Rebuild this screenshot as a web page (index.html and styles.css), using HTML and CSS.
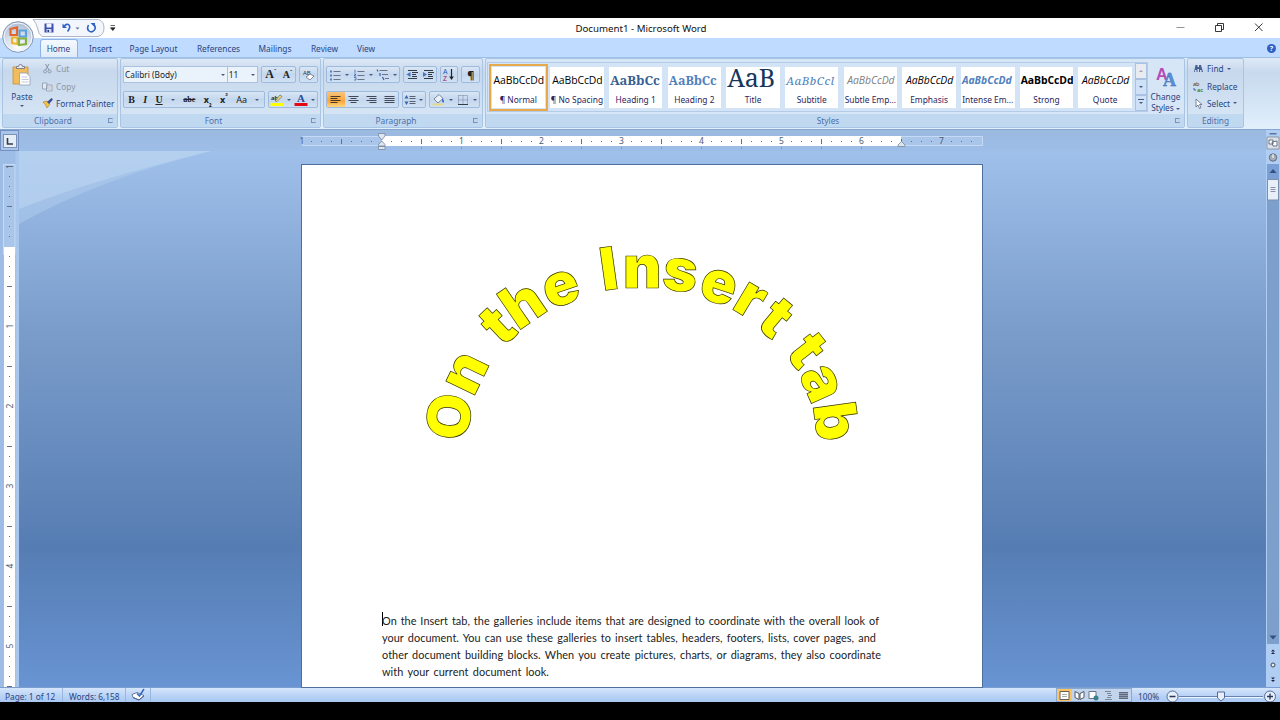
FILE: index.html
```html
<!DOCTYPE html>
<html lang="en">
<head>
  <meta charset="UTF-8" />
  <title>Document1 - Microsoft Word</title>
  <link rel="stylesheet" href="styles.css">
</head>
<body>
  <div class="window">
    <header class="titlebar">
      <svg class="quick" width="120" height="20" viewBox="0 0 120 20">
        <path d="M33 1.5H98.500Q104 3 104 10Q104 17 98 18.500H42Q38 16 37.500 10Q36 4 33 1.500Z" fill="#f3f7fd" stroke="#9aa6b8" stroke-width=".8"/>
        <path d="M44.500 5.500h9v9h-9z" fill="#3d4fae"/><path d="M46.500 5.500h5v4h-5z" fill="#eef3ff"/><path d="M46.500 11h5v3.500h-5z" fill="#cdd6ee"/><path d="M47.500 12h1.500v2h-1.500z" fill="#27357c"/>
        <path d="M62.500 5.500v4.500h4.500z" fill="#2f62c4"/><path d="M64 8.500q3-3.500 5-1.500t-1.500 6.500" fill="none" stroke="#2f62c4" stroke-width="1.600"/>
        <path d="M75.500 9.500h4l-2 2z" fill="#5b6f92"/>
        <path d="M88.500 7q-2 4 .5 6t5-.5t0-6" fill="none" stroke="#2f62c4" stroke-width="1.600"/><path d="M90.500 5h4.500v4.500z" fill="#2f62c4"/>
        <path d="M110.500 7.500h4.500M110.500 9.800h4.500l-2.200 2.800z" fill="#222" stroke="#222" stroke-width=".7"/>
      </svg>
      <h1>Document1 - Microsoft Word</h1>
      <svg class="controls" width="110" height="20" viewBox="0 0 110 20">
        <g fill="none" stroke="#222" stroke-width=".9">
          <path d="M6.500 9.500h8" stroke="#888"/>
          <path d="M45.500 7.500h6v6h-6zM47.500 7.500v-2h6v6h-2"/>
          <path d="M85 5.500l7.500 7.500M92.500 5.500l-7.500 7.500"/>
        </g>
      </svg>
    </header>

    <svg class="office" width="34" height="34" viewBox="0 0 34 34">
      <defs>
        <radialGradient id="orb" cx=".5" cy=".8" r=".8"><stop offset="0" stop-color="#fff"/><stop offset=".5" stop-color="#d7e0ed"/><stop offset="1" stop-color="#aab9d0"/></radialGradient>
      </defs>
      <circle cx="17" cy="17" r="15.300" fill="url(#orb)" stroke="#8799b5"/>
      <circle cx="17" cy="17" r="14" fill="none" stroke="#f6f9ff" stroke-width="1"/>
      <g fill="none" stroke-width="2.200">
        <path d="M18.500 10.500h6.500v6h-6.500z" stroke="#5ba3dc"/>
        <path d="M9.500 9l6.500-1.500v7.500h-6.500z" stroke="#e2662f"/>
        <path d="M11 17.500h5.500v6.500l-5.500-1z" stroke="#f0b32e"/>
        <path d="M18 18.500h7v5.500l-7 1z" stroke="#84b044"/>
      </g>
    </svg>

    <nav class="tabs">
      <a class="home active">Home</a>
      <a class="insert">Insert</a>
      <a class="layout">Page Layout</a>
      <a class="references">References</a>
      <a class="mailings">Mailings</a>
      <a class="review">Review</a>
      <a class="view">View</a>
      <span class="help">?</span>
    </nav>

    <section class="ribbon">
      <div class="group clipboard">
        <div class="group-body">
          <div class="paste">
            <svg width="20" height="23" viewBox="0 0 20 23">
              <path d="M1 3h15v17h-15z" fill="#f0bc5c" stroke="#c98f35" stroke-width=".8"/>
              <path d="M4.500 4.500v-2h2q0-2 2-2t2 2h2v2z" fill="#e7e9ee" stroke="#686d78" stroke-width=".8"/>
              <path d="M7.500 9h7l3.500 3.500v8.500h-10.500z" fill="#fff" stroke="#8f9db5" stroke-width=".8"/>
              <path d="M9.500 13h6M9.500 15.500h7M9.500 18h7" stroke="#b4bfd2" stroke-width=".8"/>
            </svg>
            <span>Paste</span>
            <i class="caret"></i>
          </div>
          <ul class="commands">
            <li class="off"><svg width="11" height="11" viewBox="0 0 11 11"><path d="M3.500 1l3.500 6M7 1l-3.500 6" stroke="#8c96a5"/><path d="M3 7a1.500 1.500 0 1 0 .1 0M7.500 7a1.500 1.500 0 1 0 .1 0" fill="none" stroke="#8c96a5"/></svg>Cut</li>
            <li class="off"><svg width="11" height="11" viewBox="0 0 11 11"><path d="M.5 2h4.500v6h-4.500zM4.500 4h5.500v6h-5.500z" fill="#e3e9f1" stroke="#99a5b6"/><path d="M6 6h3M6 8h3" stroke="#a9b4c3" stroke-width=".7"/></svg>Copy</li>
            <li><svg width="11" height="11" viewBox="0 0 11 11"><path d="M1 4l4-1 3 3-3 4q-1-3-4-6z" fill="#f5c04c" stroke="#a97c26" stroke-width=".6"/><path d="M5 4l4.500-4 1.500 1.500-4 4.500z" fill="#3a4f8c"/></svg>Format Painter</li>
          </ul>
        </div>
        <footer>Clipboard<b class="launch"></b></footer>
      </div>

      <div class="group font">
        <div class="group-body rows">
          <div class="row">
            <div class="combo face">Calibri (Body)<i class="caret"></i></div>
            <div class="combo size">11<i class="caret"></i></div>
            <div class="tools grow"><span class="serif big">A<sup>ˆ</sup></span><span class="serif">A<sup>ˇ</sup></span></div>
            <div class="tools clear"><svg width="13" height="12" viewBox="0 0 13 12"><text x="1" y="6" font-family="Noto Sans" font-size="6" fill="#333">AB</text><path d="M4 8l4-3 4 2-4 4z" fill="#fff" stroke="#6a6f7c" stroke-width=".8"/></svg></div>
          </div>
          <div class="row">
            <div class="tools format"><span class="serif">B</span><span class="serif"><em>I</em></span><span class="serif"><u>U</u></span><i class="caret"></i><span class="serif small"><s>abc</s></span><span class="sans">x<sub>₂</sub></span><span class="sans">x<sup>²</sup></span><span class="case">Aa</span><i class="caret"></i></div>
            <div class="tools colors">
              <svg width="14" height="14" viewBox="0 0 14 14"><text x="1" y="6.500" font-family="Noto Sans" font-size="6" font-weight="bold" fill="#333">ab</text><path d="M5 8l5-6 2 1.500-5 5z" fill="#f2d878" stroke="#646b50" stroke-width=".7"/><path d="M.5 10h13v3h-13z" fill="#ff0"/></svg>
              <i class="caret"></i>
              <svg width="14" height="14" viewBox="0 0 14 14"><text x="3" y="8.800" font-family="Liberation Serif" font-size="11" font-weight="bold" fill="#2b4a9b">A</text><path d="M.5 10h13v3h-13z" fill="#e30b13"/></svg>
              <i class="caret"></i>
            </div>
          </div>
        </div>
        <footer>Font<b class="launch"></b></footer>
      </div>

      <div class="group paragraph">
        <div class="group-body rows">
          <div class="row">
            <div class="tools lists">
              <svg width="12" height="12" viewBox="0 0 12 12"><path d="M4.500 2.500h7M4.500 6.500h7M4.500 10.500h7" stroke="#6b7384"/><path d="M1 1.500h2v2h-2zM1 5.500h2v2h-2zM1 9.500h2v2h-2z" fill="#5c7db8"/></svg><i class="caret"></i>
              <svg width="12" height="12" viewBox="0 0 12 12"><path d="M4.500 2.500h7M4.500 6.500h7M4.500 10.500h7" stroke="#6b7384"/><path d="M2 .8v3M1 5h1.500v1l-1.500 1h2M1 8.500h2v2.500h-2" fill="none" stroke="#3d62a8" stroke-width=".8"/></svg><i class="caret"></i>
              <svg width="12" height="12" viewBox="0 0 12 12"><path d="M2.500 1.500h8M5 5.500h6M8 9.500h4" stroke="#6b7384"/><path d="M0 .5l1 2M3 4v3M5.500 8l1.500 3" stroke="#3d62a8" stroke-width="1.200"/></svg><i class="caret"></i>
            </div>
            <div class="tools indents">
              <svg width="12" height="12" viewBox="0 0 12 12"><path d="M2 1.500h9M6 3.500h6M6 5.500h4M6 7.500h5M2 9.500h9" stroke="#333b4a"/><path d="M4.500 3v5l-4-2.500z" fill="#4b74bd"/></svg>
              <svg width="12" height="12" viewBox="0 0 12 12"><path d="M2 1.500h9M6 3.500h6M6 5.500h4M6 7.500h5M2 9.500h9" stroke="#333b4a"/><path d="M1 3v5l4-2.500z" fill="#4b74bd"/></svg>
            </div>
            <div class="tools single"><svg width="12" height="13" viewBox="0 0 12 13"><text x="0" y="6" font-family="Noto Sans" font-size="7" fill="#2b55b0">A</text><text x="0" y="12.500" font-family="Noto Sans" font-size="7" fill="#a02340">Z</text><path d="M8.500 1v9" stroke="#222" stroke-width="1.200"/><path d="M6.200 8.500h4.600l-2.300 3.500z" fill="#222"/></svg></div>
            <div class="tools single"><span class="pilcrow">¶</span></div>
          </div>
          <div class="row">
            <div class="tools align">
              <span class="on"><svg width="11" height="10" viewBox="0 0 11 10"><path d="M.5 1.500h10M.5 3.500h7M.5 5.500h10M.5 7.500h7" stroke="#4a3a25"/></svg></span>
              <span><svg width="11" height="10" viewBox="0 0 11 10"><path d="M.5 1.500h10M2.500 3.500h6M.5 5.500h10M2.500 7.500h6" stroke="#40485a"/></svg></span>
              <span><svg width="11" height="10" viewBox="0 0 11 10"><path d="M.5 1.500h10M3.500 3.500h7M.5 5.500h10M3.500 7.500h7" stroke="#40485a"/></svg></span>
              <span><svg width="11" height="10" viewBox="0 0 11 10"><path d="M.5 1.500h10M.5 3.500h10M.5 5.500h10M.5 7.500h10" stroke="#40485a"/></svg></span>
            </div>
            <div class="tools spacing"><svg width="12" height="12" viewBox="0 0 12 12"><path d="M5.500 2.500h6M5.500 4.500h6M5.500 7.500h6M5.500 9.500h6" stroke="#596174"/><path d="M.5 4.500l2-3.500 2 3.500zM.5 7.500l2 3.500 2-3.500z" fill="#3d62a8"/></svg><i class="caret"></i></div>
            <div class="tools fills">
              <svg width="13" height="13" viewBox="0 0 13 13"><path d="M2 6l5-4.500 4 4-5 4.500z" fill="#eef2f8" stroke="#5d6b88" stroke-width=".8"/><path d="M10 5q3 3 1.500 4.500t-1.500-4.500" fill="#3163bd"/><path d="M.5 10.500h11v2h-11z" fill="#e4d88a"/></svg><i class="caret"></i>
              <svg width="12" height="12" viewBox="0 0 12 12"><path d="M1.500 1.500h9v9M1.500 1.500v9M6 1.500v9M1.500 6h9" fill="none" stroke="#77829a" stroke-dasharray="1 1"/><path d="M1 10.500h10" stroke="#333b4a"/></svg><i class="caret"></i>
            </div>
          </div>
        </div>
        <footer>Paragraph<b class="launch"></b></footer>
      </div>

      <div class="group styles">
        <div class="group-body">
          <div class="gallery">
            <div class="style selected"><span class="sample">AaBbCcDd</span><small>¶ Normal</small></div>
            <div class="style"><span class="sample">AaBbCcDd</span><small>¶ No Spacing</small></div>
            <div class="style"><span class="sample h1">AaBbCc</span><small>Heading 1</small></div>
            <div class="style"><span class="sample h2">AaBbCc</span><small>Heading 2</small></div>
            <div class="style"><span class="sample title">AaB</span><small>Title</small></div>
            <div class="style"><span class="sample subtitle">AaBbCcl</span><small>Subtitle</small></div>
            <div class="style"><span class="sample subtle">AaBbCcDd</span><small>Subtle Emp...</small></div>
            <div class="style"><span class="sample emphasis">AaBbCcDd</span><small>Emphasis</small></div>
            <div class="style"><span class="sample intense">AaBbCcDd</span><small>Intense Em...</small></div>
            <div class="style"><span class="sample strong">AaBbCcDd</span><small>Strong</small></div>
            <div class="style"><span class="sample emphasis">AaBbCcDd</span><small>Quote</small></div>
            <div class="pager"><span class="dim"><i class="caret up"></i></span><span><i class="caret"></i></span><span><i class="caret more"></i></span></div>
          </div>
          <div class="change">
            <svg width="22" height="21" viewBox="0 0 22 21"><text x="1" y="14" font-family="Liberation Sans" font-size="16" font-weight="bold" fill="#b44bb8">A</text><text x="8" y="19.500" font-family="Liberation Serif" font-size="18" font-weight="bold" fill="#5b8fdb" stroke="#3768b4" stroke-width=".4">A</text></svg>
            <span>Change</span>
            <span>Styles <i class="caret"></i></span>
          </div>
        </div>
        <footer>Styles<b class="launch"></b></footer>
      </div>

      <div class="group editing">
        <div class="group-body">
          <ul class="commands">
            <li><svg width="11" height="11" viewBox="0 0 11 11"><path d="M1 9l1.500-7h2v7zM6 9v-7h2l2 7zM4 4h3v2h-3z" fill="#4a5f92"/><path d="M2 7h1.500v2h-1.500zM7 7h1.500v2h-1.500z" fill="#cbd8f0"/></svg>Find <i class="caret"></i></li>
            <li><svg width="11" height="11" viewBox="0 0 11 11"><text x="0" y="5" font-family="Noto Sans" font-size="5.500" fill="#333">ab</text><text x="4" y="10.500" font-family="Noto Sans" font-size="5.500" font-weight="bold" fill="#2f8a46">ac</text><path d="M1 7v2h2" fill="none" stroke="#3a62b5"/></svg>Replace</li>
            <li><svg width="11" height="11" viewBox="0 0 11 11"><path d="M3 1v8l2-2 1.500 3.500 1.500-.8-1.500-3.200h2.500z" fill="#fff" stroke="#5c6a85" stroke-width=".8"/></svg>Select <i class="caret"></i></li>
          </ul>
        </div>
        <footer>Editing</footer>
      </div>
    </section>

    <div class="ruler-row">
      <div class="tabstop"><svg width="12" height="12" viewBox="0 0 12 12"><path d="M3.500 3v6h5.500" fill="none" stroke="#333b52" stroke-width="1.600"/></svg></div>
      <svg class="ruler" width="700" height="21" viewBox="300 130 700 21">
        <defs>
          <pattern id="inch" x="382" y="137" width="80" height="9" patternUnits="userSpaceOnUse">
            <path d="M9 4h1v1h-1zM19 4h1v1h-1zM29 4h1v1h-1zM49 4h1v1h-1zM59 4h1v1h-1zM69 4h1v1h-1zM39 2h1v5h-1z" fill="#63708a"/>
          </pattern>
        </defs>
        <path d="M302.500 136.500h680v9h-680z" fill="#a9c5e9" stroke="#c5daf4"/>
        <path d="M382 136h519v10h-519z" fill="#fff"/>
        <path d="M303 137h678v9h-678z" fill="url(#inch)"/>
        <path d="M421.500 147v2M461.500 147v2M501.500 147v2M541.500 147v2M581.500 147v2M621.500 147v2M661.500 147v2M701.500 147v2M741.500 147v2M781.500 147v2M821.500 147v2M861.500 147v2" stroke="#7d99c2"/>
        <g class="numbers"><text x="302" y="144">1</text><text x="461.500" y="144">1</text><text x="541.500" y="144">2</text><text x="621.500" y="144">3</text><text x="701.500" y="144">4</text><text x="781.500" y="144">5</text><text x="861.500" y="144">6</text><text x="941.500" y="144">7</text></g>
        <g fill="#dfe6ef" stroke="#76879f" stroke-width=".8">
          <path d="M378.500 133.500h6.500v2.500l-3.200 4-3.300-4z"/><path d="M381.800 141l3.200 3.500v1.500h-6.500v-1.500zM378.500 146.500h6.500v3h-6.500z"/><path d="M901.500 141.500l3.500 3.500v1.500h-7v-1.500z"/>
        </g>
      </svg>
    </div>

    <main class="workspace">
      <svg class="vruler" width="19" height="536" viewBox="0 151 19 536">
        <defs>
          <pattern id="vinch" x="4" y="247" width="11" height="80" patternUnits="userSpaceOnUse">
            <path d="M5 9h1v1h-1zM5 19h1v1h-1zM5 29h1v1h-1zM5 49h1v1h-1zM5 59h1v1h-1zM5 69h1v1h-1zM3 39h5v1h-5z" fill="#63708a"/>
          </pattern>
        </defs>
        <path d="M0 151h19v536h-19z" fill="#9dbde6"/><path d="M15.500 151h3.500v536h-3.500z" fill="#a9c7ec"/>
        <path d="M3.500 164.500h11.500v90h-11.500z" fill="#a9c5e9" stroke="#c5daf4"/>
        <path d="M4 247h11v440h-11z" fill="#fff"/>
        <path d="M4 168h11v519h-11z" fill="url(#vinch)"/>
        <g class="numbers"><text transform="translate(12.500 166.500) rotate(-90)">1</text><text transform="translate(12.500 326) rotate(-90)">1</text><text transform="translate(12.500 406) rotate(-90)">2</text><text transform="translate(12.500 486) rotate(-90)">3</text><text transform="translate(12.500 566) rotate(-90)">4</text><text transform="translate(12.500 646) rotate(-90)">5</text></g>
      </svg>

      <div class="canvas">
        <svg class="swoosh" width="200" height="75" viewBox="0 0 200 75">
          <path d="M0 0H192Q80 28 0 73Z" fill="#b5d0ef" opacity=".45"/>
          <path d="M0 0H192Q70 30 0 58Z" fill="#bed7f3" opacity=".55"/>
        </svg>
        <article class="page">
          <svg class="wordart" width="460" height="220" viewBox="410 235 460 220">
            <text transform="translate(470 419) rotate(-83)">O</text>
            <text transform="translate(482 380.500) rotate(-64)">n</text>
            <text transform="translate(511 340) rotate(-43)">t</text>
            <text transform="translate(534 320.500) rotate(-34.500)">h</text>
            <text transform="translate(566.500 304) rotate(-19)">e</text>
            <text transform="translate(611.500 289.500) rotate(-8)">I</text>
            <text transform="translate(642.200 287.700)">n</text>
            <text transform="translate(678 291) rotate(8)">s</text>
            <text transform="translate(713.500 302) rotate(18)">e</text>
            <text transform="translate(741.200 314.500) rotate(31)">r</text>
            <text transform="translate(763.500 333) rotate(40)">t</text>
            <text transform="translate(791.500 362.500) rotate(52)">t</text>
            <text transform="translate(805.500 390) rotate(66)">a</text>
            <text transform="translate(815.500 424) rotate(82)">b</text>
          </svg>
          <div class="body-text">
            <p class="l1">On the Insert tab, the galleries include items that are designed to coordinate with the overall look of</p>
            <p class="l2">your document. You can use these galleries to insert tables, headers, footers, lists, cover pages, and</p>
            <p class="l3">other document building blocks. When you create pictures, charts, or diagrams, they also coordinate</p>
            <p class="l4">with your current document look.</p>
          </div>
        </article>
      </div>

      <svg class="scroll" width="14" height="557" viewBox="0 130 14 557">
        <path d="M0 130h14v557h-14z" fill="#b0cdf3"/>
        <path d="M3.500 133h7v1.500h-7z" fill="#5d7699"/>
        <path d="M1 137h12v12h-12z" fill="#dce1e8" stroke="#8b97a9"/><path d="M3 140h4v4h-4zM6 142l5-1v5h-4z" fill="#fff" stroke="#5a6579" stroke-width=".9"/>
        <circle cx="7" cy="157.500" r="3.700" fill="#a7adb7" stroke="#626b7b"/><path d="M7 154v4" stroke="#fff"/>
        <path d="M1 164h12v480h-12z" fill="#7d9fcc"/><path d="M1 164h12v14.500h-12z" fill="#799fd5"/>
        <path d="M3.500 173l3.500-4 3.500 4zM3.500 635.500h7l-3.500 4z" fill="#35507f"/>
        <path d="M1.500 179.500h11v20.500h-11z" fill="#e8eff8" stroke="#798fae"/><path d="M4.500 187.500h5M4.500 189.500h5M4.500 191.500h5" stroke="#8793a7"/>
        <path d="M5 651.500l2-2 2 2zM5 654l2-2 2 2zM5 677.500l2 2 2-2zM5 680l2 2 2-2z" fill="#1c2740"/><circle cx="7" cy="665" r="2" fill="#e8edf4" stroke="#3b4558"/>
      </svg>
    </main>

    <footer class="status">
      <span class="pages">Page: 1 of 12</span>
      <span class="words">Words: 6,158</span>
      <span class="proof"><svg width="15" height="13" viewBox="0 0 15 13"><path d="M1 6.500l5-2 7 3-5 4.500-6-2.500z" fill="#fff" stroke="#596c93" stroke-width=".9"/><path d="M2 9.500l6 2.500 5-4" fill="none" stroke="#4d6296"/><path d="M6 5.500l2.500 2.500 4.500-7" fill="none" stroke="#3869c4" stroke-width="1.500"/></svg></span>
      <div class="views">
        <span class="on"><svg width="11" height="11" viewBox="0 0 11 11"><path d="M1 1.500h9v8h-9z" fill="#fff" stroke="#66604f"/><path d="M3 4.500h5M3 6.500h5" stroke="#aaa"/></svg></span>
        <span><svg width="11" height="11" viewBox="0 0 11 11"><path d="M1 1.500l4 2v6l-4-2zM10 1.500l-4 2v6l4-2z" fill="#fff" stroke="#4d5666"/></svg></span>
        <span><svg width="11" height="11" viewBox="0 0 11 11"><path d="M1 1.500h7v7h-7z" fill="#fff" stroke="#687387"/><circle cx="8" cy="8" r="2.500" fill="#397f8c"/></svg></span>
        <span><svg width="11" height="11" viewBox="0 0 11 11"><path d="M2 1.500h6M4 3.500h4M5 5.500h4M4 7.500h4M2 9.500h7" stroke="#7d879a"/></svg></span>
        <span><svg width="11" height="11" viewBox="0 0 11 11"><path d="M1 2h9v7h-9z" fill="#8f9bb0"/><path d="M1 2.500h9M1 4.500h9M1 6.500h9M1 8.500h9" stroke="#5f6b80"/></svg></span>
      </div>
      <span class="percent">100%</span>
      <svg class="zoom" width="116" height="15" viewBox="1164 687 116 15">
        <path d="M1179 695.500h84" stroke="#6582b0"/><path d="M1179 696.500h84" stroke="#eff5ff"/>
        <g fill="#e8effa" stroke="#526c9b"><circle cx="1172.500" cy="695.500" r="5.500"/><circle cx="1270" cy="695.500" r="5.500"/><path d="M1217.500 691h7v6l-3.500 3-3.500-3z"/></g>
        <path d="M1169.500 695.500h6M1267 695.500h6M1270 692.500v6" stroke="#27365c" stroke-width="1.300"/>
      </svg>
    </footer>
  </div>
</body>
</html>
```
FILE: styles.css
```css
* {
  box-sizing: border-box;
}
body {
  margin: 0;
  padding: 18px 0;
  height: 720px;
  overflow: hidden;
  background: #000;
  font-family: "Noto Sans", sans-serif;
  font-size: 8.3px;
  color: #2c4480;
}
svg {
  display: block;
  flex: none;
  overflow: visible;
}
.window {
  position: relative;
  display: flex;
  flex-direction: column;
  width: 1280px;
  height: 684px;
  overflow: hidden;
}
.titlebar {
  display: flex;
  height: 20px;
  background: #fff;
}
.titlebar h1 {
  margin: 0;
  width: 160px;
  text-align: center;
  font-size: 9.7px;
  font-weight: 400;
  line-height: 21px;
  white-space: nowrap;
  color: #111;
}
.titlebar .quick {
  margin-right: 441px;
}
.titlebar .controls {
  margin-left: auto;
}
/* the orb hangs over both the title bar and the tab strip */
.office {
  position: absolute;
  left: 1px;
  top: 2px;
}
.tabs {
  display: flex;
  height: 19px;
  padding-left: 40px;
  padding-right: 4px;
  background: #bfdbff;
}
.tabs a {
  line-height: 21px;
  text-align: center;
}
.tabs .home { width: 38px; margin-right: 1px; }
.tabs .insert { width: 43px; }
.tabs .layout { width: 63px; }
.tabs .references { width: 67px; }
.tabs .mailings { width: 46px; }
.tabs .review { width: 53px; }
.tabs .view { width: 30px; }
.tabs .active {
  margin-top: 1px;
  line-height: 17px;
  border: 1px solid #8db2e3;
  border-bottom: 0;
  border-radius: 3px 3px 0 0;
  background: linear-gradient(#f4f9ff, #e0ebf8);
  text-indent: -1px;
}
.help {
  margin: 6px 0 0 auto;
  width: 9px;
  height: 9px;
  border-radius: 50%;
  background: #3160c4;
  color: #fff;
  font-size: 7px;
  font-weight: bold;
  line-height: 9px;
  text-align: center;
}
.ribbon {
  display: flex;
  gap: 3px;
  height: 73px;
  padding: 0 2px 1px;
  border-top: 1px solid #9dbfe8;
  border-bottom: 1px solid #86a6d2;
  background: linear-gradient(#dfeaf7, #c8d9ee 20%, #d8e8f7 75%, #e2f0fb);
}
.group {
  display: flex;
  flex-direction: column;
  flex: none;
  border: 1px solid #a9c5e5;
  border-radius: 2px;
  background: linear-gradient(#dde8f5, #c7d8ed 18%, #d9e8f6);
}
.clipboard { width: 116px; }
.font { width: 200px; }
.paragraph { width: 160px; }
.styles { width: 700px; background: #d6e6f7; }
.editing { width: 57px; }
.font, .paragraph, .styles, .editing { margin-left: -1px; }
.font { width: 201px; }
.group-body {
  display: flex;
  flex: 1;
  min-height: 0;
}
.group > footer {
  display: flex;
  align-items: center;
  justify-content: center;
  height: 13px;
  padding-bottom: 1px;
  background: #c1d8f1;
  color: #4b71a9;
}
.launch {
  margin-left: auto;
  margin-right: 4px;
  width: 5px;
  height: 5px;
  border: 1px solid #7592bb;
  border-right-color: #b8cce8;
}
.group > footer::before {
  content: "";
  margin-left: -5px;
  margin-right: auto;
}
.editing > footer::before {
  display: none;
}
.caret {
  display: inline-block;
  flex: none;
  width: 0;
  height: 0;
  border: 2px solid transparent;
  border-top-color: #465b84;
  border-bottom: 0;
}
.paste {
  display: flex;
  flex-direction: column;
  align-items: center;
  width: 38px;
  padding-top: 5px;
}
.paste span {
  margin: 4px 0 3px;
  line-height: 11px;
}
.commands {
  margin: 1px 0 0;
  padding: 0;
  list-style: none;
  white-space: nowrap;
}
.clipboard .commands {
  margin-left: 1px;
}
.commands li {
  display: flex;
  align-items: center;
  gap: 3px;
  height: 17.400px;
}
.editing .commands {
  padding-left: 5px;
}
.off {
  color: #8e97a6;
}
.rows {
  flex-direction: column;
  gap: 8px;
  padding: 7px 2px 0;
}
.row {
  display: flex;
  gap: 3px;
  height: 17px;
}
.combo {
  display: flex;
  align-items: center;
  justify-content: space-between;
  padding: 0 2px 0 1px;
  border: 1px solid #abc1de;
  background: #eaf2fb;
  color: #222;
  font-size: 8.3px;
}
.face { width: 107px; }
.size { width: 32px; margin-left: -4px; }
.tools {
  display: flex;
  align-items: center;
  justify-content: space-around;
  border: 1px solid #9ebadd;
  border-radius: 2px;
  background: linear-gradient(#d9e6f5, #c4d7ee 50%, #d0e1f4);
  color: #222;
}
.grow { width: 36px; }
.clear { width: 19px; }
.format { width: 143px; }
.colors { width: 51px; }
.lists { width: 76px; }
.indents { width: 35px; }
.single { width: 19px; }
.align { width: 73px; }
.spacing { width: 24px; }
.fills { width: 52px; }
.serif {
  font-family: "Liberation Serif", serif;
  font-weight: bold;
  font-size: 10px;
}
.big { font-size: 12px; }
.small { font-size: 8px; }
.tools sup, .tools sub {
  font-size: 7px;
  line-height: 0;
}
.sans {
  font-weight: bold;
  font-size: 9px;
}
.case { font-size: 9px; }
.pilcrow { font-size: 11px; font-weight: bold; }
.align span {
  display: flex;
  align-items: center;
  justify-content: center;
  width: 18px;
  height: 100%;
}
.align .on {
  background: linear-gradient(#f6c57c, #fba63c 60%, #fdd77f);
}
.gallery {
  display: flex;
  gap: 5.200px;
  width: 661px;
  height: 50px;
  margin: 3px 0 0 1px;
  padding: 4px 0 3px 3.500px;
  border: 1px solid #b4cbe8;
  background: #d3e4f6;
}
.style {
  flex: none;
  width: 53.500px;
  height: 41px;
  overflow: hidden;
  background: #fff;
  text-align: center;
  white-space: nowrap;
  color: #000;
}
.selected {
  outline: 2px solid #e8a94a;
  outline-offset: 1px;
}
.sample {
  display: flex;
  align-items: center;
  justify-content: center;
  height: 27px;
  padding: 0 0 1px 1px;
  font-family: "Open Sans", sans-serif;
  font-size: 10.4px;
  letter-spacing: -.05px;
}
.style small {
  display: block;
  font-size: 8.4px;
  line-height: 12px;
  color: #2b2560;
}
.h1, .h2, .title, .subtitle {
  font-family: "Noto Serif", "Liberation Serif", serif;
  justify-content: flex-start;
}
.h1 { color: #365f91; font-weight: bold; font-size: 13px; }
.h2 { color: #4f81bd; font-weight: bold; font-size: 12.500px; }
.title { color: #17365d; font-size: 25px; line-height: 20px; padding-bottom: 8px; }
.subtitle { color: #4f81bd; font-style: italic; font-size: 11.500px; letter-spacing: .5px; }
.subtle { color: #808080; font-style: italic; }
.emphasis { font-style: italic; }
.intense { color: #4f81bd; font-style: italic; font-weight: bold; justify-content: flex-start; }
.strong { font-weight: bold; justify-content: flex-start; }
.pager {
  display: flex;
  flex-direction: column;
  width: 12px;
  margin: -4px 0 -3px -2px;
}
.pager span {
  display: flex;
  align-items: center;
  justify-content: center;
  flex: 1;
  border: 1px solid #a9c2e2;
  background: #cfe1f6;
}
.pager .dim {
  background: #e8ecf1;
}
.up {
  transform: scaleY(-1);
  opacity: .5;
}
.more {
  position: relative;
}
.more::before {
  content: "";
  position: absolute;
  left: -3px;
  top: -5px;
  width: 6px;
  height: 1px;
  background: #465b84;
}
.change {
  display: flex;
  flex-direction: column;
  align-items: center;
  width: 35px;
  padding-top: 7px;
  line-height: 11px;
  white-space: nowrap;
}
.change svg {
  margin-bottom: 4px;
}
.change .caret {
  vertical-align: middle;
}
.ruler-row {
  display: flex;
  height: 21px;
  background: linear-gradient(#9cb9df, #9dbee8);
}
.tabstop {
  display: flex;
  align-items: center;
  justify-content: center;
  width: 19px;
  margin-right: 281px;
  border: 1px solid #7590c0;
  background: #aac5ea;
}
.tabstop svg {
  background: #e5edf7;
  outline: 1px solid #7b91b8;
}
.numbers {
  font-size: 8.500px;
  fill: #4c5b75;
  text-anchor: middle;
}
.workspace {
  display: flex;
  height: 536px;
}
.vruler {
  overflow: hidden;
}
.canvas {
  position: relative;
  flex: 1;
  padding: 14px 0 0 283px;
  background: linear-gradient(#9fc0ea, #7b9dcb 33%, #567db3 74%, #6894d3);
}
.swoosh {
  position: absolute;
  left: 0;
  top: 0;
}
.page {
  width: 680px;
  height: 522px;
  padding: 70px 0 0 79.500px;
  outline: 1px solid #4f6f9d;
  background: #fff;
}
.wordart {
  margin-left: 28px;
}
.wordart text {
  font-family: "Inter", sans-serif;
  font-size: 59px;
  font-weight: 900;
  text-anchor: middle;
  fill: #ff0;
  stroke: #333300;
  stroke-width: .7;
}
.body-text {
  margin-top: 157px;
  border-left: 1px solid #000;
  border-image: linear-gradient(#000 15px, transparent 15px) 1;
}
.body-text p {
  margin: 0 0 0 -.5px;
  height: 17.100px;
  line-height: 17.100px;
  font-family: "Lato", sans-serif;
  font-size: 10.9px;
  letter-spacing: .05px;
  color: #222;
  white-space: nowrap;
  text-align-last: justify;
}
.l1 { width: 497px; }
.l2 { width: 494px; }
.l3 { width: 499px; }
.l4 { width: 167px; }
.scroll {
  margin-top: -21px;
  position: relative;
}
.status {
  display: flex;
  align-items: center;
  height: 15px;
  border-top: 1px solid #7b9dcf;
  background: linear-gradient(#d6e6fb, #bcd4f6 50%, #a8c8f2);
  white-space: nowrap;
}
.status > span {
  height: 14px;
  line-height: 17px;
}
.pages {
  width: 63px;
  padding-left: 5px;
  border-right: 1px solid #9ab7df;
}
.words {
  width: 63px;
  padding-left: 6px;
  border-right: 1px solid #9ab7df;
}
.proof {
  width: 25px;
  padding-left: 5px;
  border-right: 1px solid #9ab7df;
}
.views {
  display: flex;
  width: 76px;
  height: 14px;
  margin-left: auto;
  border: 1px solid #8ba8d0;
  background: #c2d5ed;
}
.views span {
  display: flex;
  flex: 1;
  align-items: center;
  justify-content: center;
}
.views .on {
  background: #fbc368;
}
.percent {
  width: 32px;
  padding-left: 6px;
}
```
